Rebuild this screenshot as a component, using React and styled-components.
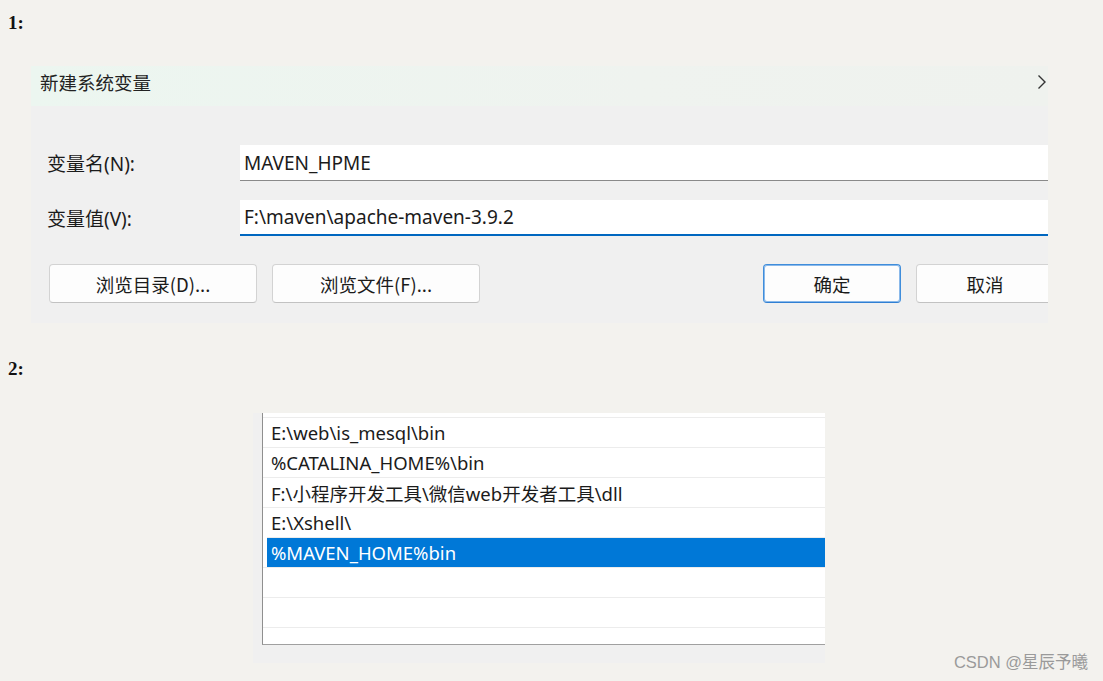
import styled, { createGlobalStyle } from 'styled-components'

const GlobalStyle = createGlobalStyle`
  body {
    margin: 0;
    background: #f3f2ee;
    font-family: "Noto Sans", "Noto Sans CJK SC", sans-serif;
    color: #1b1b1b;
  }
`

const Page = styled.div`
  position: relative;
  height: 681px;
  overflow: hidden;
`

const StepLabel = styled.div`
  font-family: "Liberation Serif", serif;
  font-weight: bold;
  font-size: 19px;
  line-height: 20px;
  padding-left: 8px;
  margin-top: ${(p) => p.top}px;
  color: #111;
`

const Dialog = styled.div`
  margin: 33px 0 0 31px;
  width: 1017px;
  overflow: hidden;
  background: #f0f0f0;
`

const TitleBar = styled.div`
  height: 40px;
  box-sizing: border-box;
  display: flex;
  align-items: center;
  justify-content: space-between;
  padding: 0 0 9px 9px;
  background: linear-gradient(to right, #ecf6f0, #eff3ef 60%, #eff2ee);
  font-family: "Noto Sans CJK SC", sans-serif;
  font-size: 18.5px;
  color: #222;
`

const DialogBody = styled.div`
  padding: 39px 0 20px 16px;
`

const FieldRow = styled.div`
  display: grid;
  grid-template-columns: 193px 1fr;
  align-items: center;
  margin-bottom: 19px;
`

const Label = styled.label`
  font-size: 19px;
`

const Input = styled.input`
  height: 36px;
  box-sizing: border-box;
  border: none;
  border-bottom: ${(p) => (p.focused ? '2px solid #0067c0' : '1px solid #8a8a8a')};
  background: #fff;
  padding: 0 0 0 4px;
  font-family: "Noto Sans", "Noto Sans CJK SC", sans-serif;
  font-size: 19px;
  color: #1b1b1b;
  outline: none;
`

const ButtonRow = styled.div`
  display: flex;
  gap: 15px;
  margin-top: 28px;
  padding-left: 2px;
  margin-right: -6px;
`

const Button = styled.button`
  width: ${(p) => p.w}px;
  height: 39px;
  flex: none;
  box-sizing: border-box;
  border-radius: 4px;
  background: #fdfdfd;
  border: 1px solid ${(p) => (p.primary ? '#3f8ddb' : '#d3d3d3')};
  border-bottom-color: ${(p) => (p.primary ? '#2f7fd3' : '#c2c2c2')};
  box-shadow: ${(p) => (p.primary ? 'inset 0 0 0 1px #8ab9ea' : 'none')};
  font-family: "Noto Sans CJK SC", sans-serif;
  font-size: 18.5px;
  color: #1b1b1b;
  margin-left: ${(p) => (p.push ? 'auto' : '0')};
  padding: 0;
`

const ListPanel = styled.div`
  margin: 34px 0 0 253px;
  width: 572px;
  height: 250px;
  box-sizing: border-box;
  background: #f0f0f0;
  padding: 0 0 18px 9px;
`

const ListBox = styled.div`
  height: 232px;
  box-sizing: border-box;
  background: #fff;
  border-left: 1px solid #8f8f8f;
  border-bottom: 1px solid #a0a0a0;
  padding-top: 4px;
  overflow: hidden;
`

const Row = styled.div`
  height: 30px;
  box-sizing: border-box;
  border-top: 1px solid #ececec;
  display: flex;
  align-items: center;
  padding-left: ${(p) => (p.selected ? '4px' : '8px')};
  margin-left: ${(p) => (p.selected ? '4px' : '0')};
  background: ${(p) => (p.selected ? '#0078d7' : 'transparent')};
  color: ${(p) => (p.selected ? '#fff' : '#1b1b1b')};
  font-size: 18.5px;
  white-space: nowrap;
`

const Watermark = styled.div`
  position: absolute;
  right: 15px;
  bottom: 8px;
  font-family: "Liberation Sans", "Noto Sans CJK SC", sans-serif;
  font-size: 16.5px;
  color: #9a9a9a;
`

const paths = [
  'E:\\web\\is_mesql\\bin',
  '%CATALINA_HOME%\\bin',
  'F:\\小程序开发工具\\微信web开发者工具\\dll',
  'E:\\Xshell\\',
  '%MAVEN_HOME%bin',
  '',
  '',
  '',
]

function Chevron() {
  return (
    <svg width="10" height="16" viewBox="0 0 10 16" style={{ marginRight: 1 }}>
      <polyline points="1.5,1.5 8,8 1.5,14.5" fill="none" stroke="#333" strokeWidth="1.4" />
    </svg>
  )
}

export default function App() {
  return (
    <>
      <GlobalStyle />
      <Page>
        <StepLabel top={13}>1:</StepLabel>
        <Dialog>
          <TitleBar>
            <span>新建系统变量</span>
            <Chevron />
          </TitleBar>
          <DialogBody>
            <FieldRow>
              <Label>变量名(N):</Label>
              <Input readOnly defaultValue="MAVEN_HPME" />
            </FieldRow>
            <FieldRow>
              <Label>变量值(V):</Label>
              <Input readOnly focused defaultValue="F:\maven\apache-maven-3.9.2" />
            </FieldRow>
            <ButtonRow>
              <Button w={208}>浏览目录(D)...</Button>
              <Button w={208}>浏览文件(F)...</Button>
              <Button w={138} primary push>确定</Button>
              <Button w={138}>取消</Button>
            </ButtonRow>
          </DialogBody>
        </Dialog>
        <StepLabel top={36}>2:</StepLabel>
        <ListPanel>
          <ListBox>
            {paths.map((p, i) => (
              <Row key={i} selected={i === 4}>{p}</Row>
            ))}
          </ListBox>
        </ListPanel>
        <Watermark>CSDN @星辰予曦</Watermark>
      </Page>
    </>
  )
}
